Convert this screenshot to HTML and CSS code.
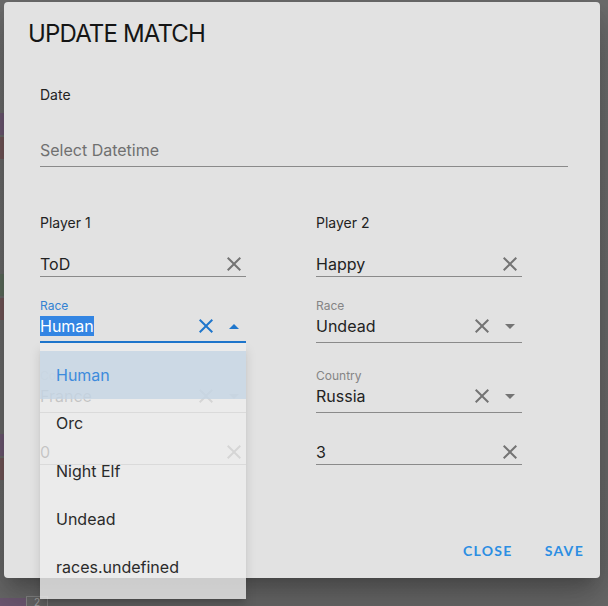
FILE: index.html
```html
<!DOCTYPE html>
<html>
<head>
<meta charset="utf-8">
<link rel="stylesheet" href="styles.css">
</head>
<body>
<div class="backdrop">
  <div class="ghost g-purple b1"></div>
  <div class="ghost g-red b2"></div>
  <div class="ghost g-green b3"></div>
  <div class="ghost g-red b4"></div>
  <div class="ghost g-purple b5"></div>
  <div class="ghost g-red b6"></div>
  <div class="ghost g-purple b7"></div>
  <div class="ghost-num">2</div>
</div>

<div class="dialog">
  <h1 class="title">UPDATE MATCH</h1>
  <div class="body">
    <div class="label">Date</div>
    <div class="field date-field">
      <div class="row"><span class="placeholder">Select Datetime</span></div>
    </div>

    <div class="cols">
      <div class="col">
        <div class="label">Player 1</div>
        <div class="field text-field">
          <div class="row"><span class="value">ToD</span>
            <svg class="icon" viewBox="0 0 24 24"><path d="M19 6.41L17.59 5 12 10.59 6.41 5 5 6.41 10.59 12 5 17.59 6.41 19 12 13.41 17.59 19 19 17.59 13.41 12z"/></svg>
          </div>
        </div>
        <div class="field select-field focused">
          <div class="small-label">Race</div>
          <div class="row"><span class="value"><span class="sel">Human</span></span>
            <svg class="icon clear" viewBox="0 0 24 24"><path d="M19 6.41L17.59 5 12 10.59 6.41 5 5 6.41 10.59 12 5 17.59 6.41 19 12 13.41 17.59 19 19 17.59 13.41 12z"/></svg>
            <svg class="icon" viewBox="0 0 24 24"><path d="M7 15l5-5 5 5z"/></svg>
          </div>
        </div>
        <div class="field select-field country">
          <div class="small-label">Country</div>
          <div class="row"><span class="value">France</span>
            <svg class="icon clear" viewBox="0 0 24 24"><path d="M19 6.41L17.59 5 12 10.59 6.41 5 5 6.41 10.59 12 5 17.59 6.41 19 12 13.41 17.59 19 19 17.59 13.41 12z"/></svg>
            <svg class="icon" viewBox="0 0 24 24"><path d="M7 10l5 5 5-5z"/></svg>
          </div>
        </div>
        <div class="field text-field score">
          <div class="row"><span class="value">0</span>
            <svg class="icon" viewBox="0 0 24 24"><path d="M19 6.41L17.59 5 12 10.59 6.41 5 5 6.41 10.59 12 5 17.59 6.41 19 12 13.41 17.59 19 19 17.59 13.41 12z"/></svg>
          </div>
        </div>
      </div>

      <div class="col">
        <div class="label">Player 2</div>
        <div class="field text-field">
          <div class="row"><span class="value">Happy</span>
            <svg class="icon" viewBox="0 0 24 24"><path d="M19 6.41L17.59 5 12 10.59 6.41 5 5 6.41 10.59 12 5 17.59 6.41 19 12 13.41 17.59 19 19 17.59 13.41 12z"/></svg>
          </div>
        </div>
        <div class="field select-field">
          <div class="small-label">Race</div>
          <div class="row"><span class="value">Undead</span>
            <svg class="icon clear" viewBox="0 0 24 24"><path d="M19 6.41L17.59 5 12 10.59 6.41 5 5 6.41 10.59 12 5 17.59 6.41 19 12 13.41 17.59 19 19 17.59 13.41 12z"/></svg>
            <svg class="icon" viewBox="0 0 24 24"><path d="M7 10l5 5 5-5z"/></svg>
          </div>
        </div>
        <div class="field select-field country">
          <div class="small-label">Country</div>
          <div class="row"><span class="value">Russia</span>
            <svg class="icon clear" viewBox="0 0 24 24"><path d="M19 6.41L17.59 5 12 10.59 6.41 5 5 6.41 10.59 12 5 17.59 6.41 19 12 13.41 17.59 19 19 17.59 13.41 12z"/></svg>
            <svg class="icon" viewBox="0 0 24 24"><path d="M7 10l5 5 5-5z"/></svg>
          </div>
        </div>
        <div class="field text-field score">
          <div class="row"><span class="value">3</span>
            <svg class="icon" viewBox="0 0 24 24"><path d="M19 6.41L17.59 5 12 10.59 6.41 5 5 6.41 10.59 12 5 17.59 6.41 19 12 13.41 17.59 19 19 17.59 13.41 12z"/></svg>
          </div>
        </div>
      </div>
    </div>
  </div>
  <div class="actions">
    <button class="btn">CLOSE</button>
    <button class="btn">SAVE</button>
  </div>
</div>

<div class="menu">
  <div class="item active">Human</div>
  <div class="item">Orc</div>
  <div class="item">Night Elf</div>
  <div class="item">Undead</div>
  <div class="item">races.undefined</div>
</div>
</body>
</html>
```

FILE: styles.css
```css
html, body {
  margin: 0;
  padding: 0;
}
body {
  width: 608px;
  height: 606px;
  overflow: hidden;
  position: relative;
  background: #6c6c6c;
  font-family: Inter, "Noto Sans", sans-serif;
  color: #222;
}

/* obscured page behind the modal */
.backdrop {
  position: absolute;
  inset: 0;
  background: linear-gradient(180deg, #6e6e6e 0%, #6a6a6a 100%);
}
.ghost {
  position: absolute;
  left: 0;
  width: 26px;
  height: 22px;
}
.g-purple { background: #6f5a74; }
.g-red { background: #74585a; }
.g-green { background: #5f6e5f; }
.b1 { top: 113px; }
.b2 { top: 137px; }
.b3 { top: 274px; }
.b4 { top: 298px; }
.b5 { top: 434px; }
.b6 { top: 458px; }
.b7 { top: 598px; }
.ghost-num {
  position: absolute;
  left: 26px;
  top: 596px;
  width: 20px;
  height: 10px;
  border: 1px solid #8a8a8a;
  color: #aaa;
  font-size: 10px;
  text-align: center;
  line-height: 10px;
}

.dialog {
  position: absolute;
  left: 4px;
  top: 2px;
  width: 596px;
  height: 576px;
  background: #e2e2e2;
  border-radius: 4px;
  box-shadow: 0 11px 15px -7px rgba(0,0,0,0.2), 0 24px 38px 3px rgba(0,0,0,0.14), 0 9px 46px 8px rgba(0,0,0,0.12);
  display: flex;
  flex-direction: column;
  box-sizing: border-box;
  padding-top: 16px;
}
.title {
  margin: 0 0 0 24px;
  font-size: 24px;
  line-height: 32px;
  font-weight: 400;
  color: #151515;
  letter-spacing: -0.85px;
}
.body {
  padding: 0 32px 0 36px;
}
.label {
  font-size: 14px;
  line-height: 20px;
  color: #222;
}
.body > .label {
  margin-top: 35px;
}
.field .row {
  display: flex;
  align-items: center;
  border-bottom: 1px solid #8a8a8a;
}
.row .value,
.row .placeholder {
  flex: 1;
  font-size: 16px;
  line-height: 24px;
  white-space: nowrap;
}
.placeholder {
  color: #707070;
}
.date-field {
  margin-top: 33px;
}
.date-field .row {
  padding-bottom: 4px;
}
.cols {
  display: grid;
  grid-template-columns: 206px 206px;
  column-gap: 70px;
  margin-top: 46px;
}
.icon {
  width: 24px;
  height: 24px;
  flex: none;
  fill: #747474;
}
.icon.clear {
  margin-right: 4px;
}
.text-field {
  margin-top: 19px;
}
.select-field {
  margin-top: 21px;
}
.select-field .row {
  padding-bottom: 4px;
}
.small-label {
  font-size: 12px;
  line-height: 16px;
  color: #858585;
}
.focused .small-label {
  color: #3482d2;
}
.focused .row {
  border-bottom: 2px solid #1f76cc;
  padding-bottom: 3px;
}
.focused .icon {
  fill: #1f76cc;
}
.sel {
  background: #3385e3;
  color: #fff;
}
.country {
  margin-top: 25px;
}
.score {
  margin-top: 27px;
}

.actions {
  margin-top: auto;
  display: flex;
  justify-content: flex-end;
  gap: 16px;
  padding: 0 8px 10px 0;
}
.btn {
  height: 36px;
  padding: 0 8px;
  border: none;
  background: transparent;
  font-family: Lato, "Open Sans", sans-serif;
  font-weight: 700;
  font-size: 14px;
  letter-spacing: 1.3px;
  color: #2c8ee2;
}

.menu {
  position: absolute;
  left: 40px;
  top: 343px;
  width: 206px;
  height: 256px;
  box-sizing: border-box;
  padding: 8px 0;
  background: rgba(238, 238, 238, 0.8);
  box-shadow: 0 5px 5px -3px rgba(0,0,0,0.15), 0 8px 10px 1px rgba(0,0,0,0.1);
}
.item {
  height: 48px;
  line-height: 48px;
  padding-left: 16px;
  font-size: 16px;
  color: #2a2a2a;
}
.item.active {
  background: rgba(196, 212, 228, 0.8);
  color: #3d8bdc;
}
```
